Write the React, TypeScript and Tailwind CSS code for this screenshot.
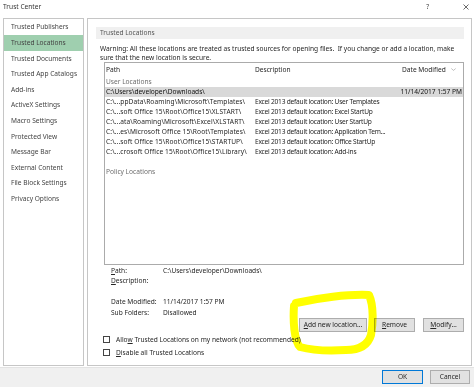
import React from 'react';

const navItems = [
  'Trusted Publishers',
  'Trusted Locations',
  'Trusted Documents',
  'Trusted App Catalogs',
  'Add-ins',
  'ActiveX Settings',
  'Macro Settings',
  'Protected View',
  'Message Bar',
  'External Content',
  'File Block Settings',
  'Privacy Options',
];

const userLocations = [
  ['C:\\...ppData\\Roaming\\Microsoft\\Templates\\', 'Excel 2013 default location: User Templates'],
  ['C:\\...soft Office 15\\Root\\Office15\\XLSTART\\', 'Excel 2013 default location: Excel StartUp'],
  ['C:\\...ata\\Roaming\\Microsoft\\Excel\\XLSTART\\', 'Excel 2013 default location: User StartUp'],
  ['C:\\...es\\Microsoft Office 15\\Root\\Templates\\', 'Excel 2013 default location: Application Tem...'],
  ['C:\\...soft Office 15\\Root\\Office15\\STARTUP\\', 'Excel 2013 default location: Office StartUp'],
  ['C:\\...crosoft Office 15\\Root\\Office15\\Library\\', 'Excel 2013 default location: Add-ins'],
];

const Btn: React.FC<{ w: string; primary?: boolean; children: React.ReactNode }> = ({ w, primary, children }) => (
  <button
    className={`${w} h-[14px] bg-[#e1e1e1] border ${
      primary ? 'border-[#0078d7]' : 'border-[#adadad]'
    } flex items-center justify-center leading-none text-[#262626]`}
  >
    {children}
  </button>
);

const Check: React.FC<{ children: React.ReactNode }> = ({ children }) => (
  <div className="h-[13px] flex items-center pl-[7px]">
    <span className="w-[7px] h-[7px] border border-[#444] bg-white" />
    <span className="ml-[6px]">{children}</span>
  </div>
);

export default function App() {
  return (
    <div className="relative w-[474px] h-[387px] overflow-hidden bg-white text-[#262626] text-[6.6px] font-['Noto_Sans','Open_Sans',sans-serif]">
      {/* Title bar */}
      <div className="h-[14px] flex items-center pl-[3px] pr-[5px] text-[#333]">
        <span>Trust Center</span>
        <span className="ml-auto text-[#444]">?</span>
        <svg className="ml-[34px]" width="6" height="6" viewBox="0 0 6 6">
          <path d="M0.5 0.5L5.5 5.5M5.5 0.5L0.5 5.5" stroke="#444" strokeWidth="0.8" />
        </svg>
      </div>

      {/* Body */}
      <div className="h-[353px] flex gap-[3px] pt-[4px] pl-[3px]">
        {/* Left nav */}
        <div className="w-[81px] h-[348px] border border-[#c6c6c6] pt-[0.5px] text-[#444]">
          {navItems.map((item) => (
            <div
              key={item}
              className={`h-[15.6px] flex items-center pl-[7px] ${
                item === 'Trusted Locations' ? 'bg-[#9fcfaf]' : ''
              }`}
            >
              {item}
            </div>
          ))}
        </div>

        {/* Right panel */}
        <div className="w-[385px] h-[348px] border border-[#c6c6c6] pt-[8px] pl-[8px] pr-[7px]">
          <div className="h-[12px] bg-[#f0f0f0] flex items-center pl-[4px] text-[#555]">Trusted Locations</div>

          <div className="w-[371px] mt-[6px] pl-[4px] leading-[8.5px]">
            Warning: All these locations are treated as trusted sources for opening files.&nbsp; If you change or add a
            location, make sure that the new location is secure.
          </div>

          {/* List */}
          <div className="ml-[8px] h-[203px] border border-[#ababab] bg-white whitespace-nowrap">
            <div className="h-[14px] flex items-center">
              <span className="w-[150px] pl-[1px]">Path</span>
              <span className="w-[147px]">Description</span>
              <span className="flex items-center">
                Date Modified
                <svg className="ml-[5px]" width="5" height="3" viewBox="0 0 5 3">
                  <path d="M0.3 0.5L2.5 2.4L4.7 0.5" stroke="#999" strokeWidth="0.6" fill="none" />
                </svg>
              </span>
            </div>
            <div className="h-[10px] flex items-center pl-[1px] text-[#6d6d6d]">User Locations</div>
            <div className="h-[10px] flex items-center bg-[#d9d9d9] text-[#111]">
              <span className="w-[150px] pl-[1px]">C:\Users\developer\Downloads\</span>
              <span className="ml-auto pr-[1px]">11/14/2017 1:57 PM</span>
            </div>
            {userLocations.map(([path, desc]) => (
              <div key={path} className="h-[10px] flex items-center">
                <span className="w-[150px] pl-[1px] tracking-[0.1px]">{path}</span>
                <span className="tracking-[-0.22px]">{desc}</span>
              </div>
            ))}
            <div className="h-[10px]" />
            <div className="h-[10px] flex items-center pl-[1px] text-[#6d6d6d]">Policy Locations</div>
          </div>

          {/* Details */}
          <div className="pl-[15px] leading-[10.5px] mt-[0.5px]">
            <div className="flex">
              <span className="w-[52px]">
                <u>P</u>ath:
              </span>
              <span>C:\Users\developer\Downloads\</span>
            </div>
            <div>
              <u>D</u>escription:
            </div>
            <div className="h-[10.5px]" />
            <div className="flex">
              <span className="w-[52px]">Date Modified:</span>
              <span>11/14/2017 1:57 PM</span>
            </div>
            <div className="flex">
              <span className="w-[52px]">Sub Folders:</span>
              <span>Disallowed</span>
            </div>
          </div>

          {/* Buttons */}
          <div className="flex justify-end h-[14px]">
            <Btn w="w-[68px]">
              <u>A</u>dd new location...
            </Btn>
            <div className="w-[7px]" />
            <Btn w="w-[41px]">
              <u>R</u>emove
            </Btn>
            <div className="w-[8px]" />
            <Btn w="w-[41px]">
              <u>M</u>odify...
            </Btn>
          </div>

          <div className="mt-[1px]">
            <Check>
              Allo<u>w</u> Trusted Locations on my network (not recommended)
            </Check>
            <Check>
              <u>D</u>isable all Trusted Locations
            </Check>
          </div>
        </div>
      </div>

      {/* Bottom bar */}
      <div className="h-[20px] bg-[#f0f0f0] border-t border-[#e3e3e3] flex justify-end items-start pt-[2px] pr-[4px]">
        <Btn w="w-[41px]" primary>
          OK
        </Btn>
        <div className="w-[7px]" />
        <Btn w="w-[40px]">Cancel</Btn>
      </div>

      {/* Yellow highlighter mark */}
      <svg className="absolute inset-0 pointer-events-none mix-blend-multiply" width="474" height="387" viewBox="0 0 474 387">
        <path
          d="M296 303 C318 298 348 294 369 295 C374 306 373 324 371 335 C368 345 360 350 346 350 C330 351 311 350 300 347 C294 341 293 320 294 306"
          stroke="#ffff00"
          strokeWidth="8"
          strokeLinecap="round"
          strokeLinejoin="round"
          fill="none"
        />
      </svg>
    </div>
  );
}
